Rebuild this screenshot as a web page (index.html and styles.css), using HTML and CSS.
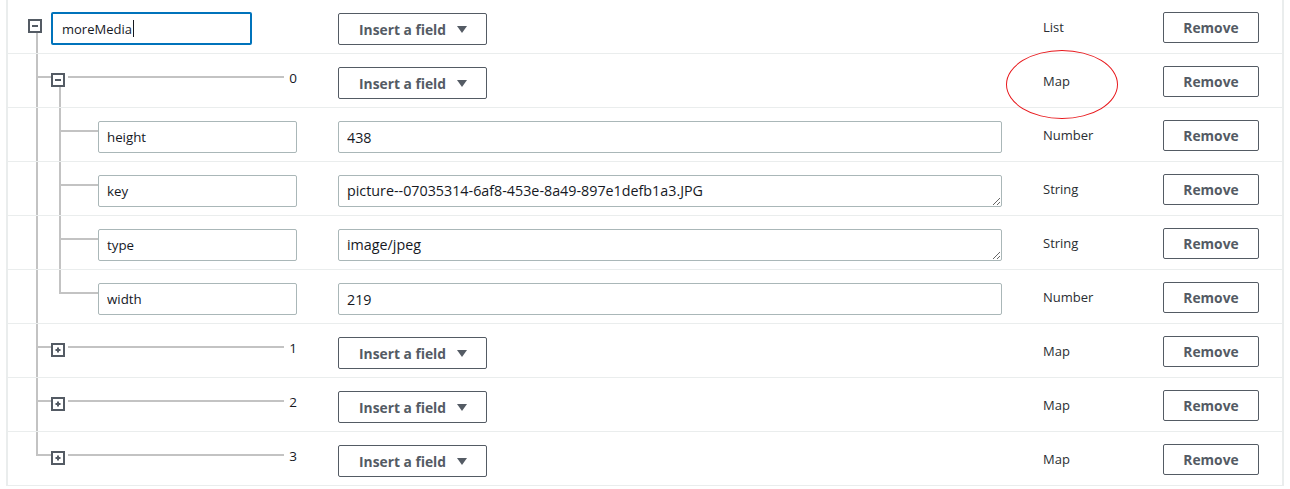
FILE: index.html
```html
<!DOCTYPE html>
<html lang="en">
<head>
	<meta charset="utf-8">
	<title>Edit item</title>
	<link rel="stylesheet" href="styles.css">
</head>
<body>
<div class="attr-tree">
	<!-- annotation drawn over the type column -->
	<span class="note-ring"></span>

	<!-- moreMedia (List) -->
	<div class="attr-row">
		<div class="key-cell">
			<div class="node node-root">
				<svg class="toggle" width="14" height="14" viewBox="0 0 14 14"><rect x="1" y="1" width="12" height="12" fill="#fff" stroke="#545b64" stroke-width="2"/><path d="M4 7h6" stroke="#545b64" stroke-width="2"/></svg>
				<span class="stem"></span>
			</div>
			<div class="name-box name-focus">moreMedia<span class="caret"></span></div>
		</div>
		<div class="value-cell"><button class="btn insert">Insert a field <svg width="10" height="7" viewBox="0 0 10 7"><path d="M0 0h10L5 7z" fill="#545b64"/></svg></button></div>
		<div class="type-cell">List</div>
		<div class="action-cell"><button class="btn remove">Remove</button></div>
	</div>

	<!-- 0 (Map) -->
	<div class="attr-row">
		<div class="key-cell">
			<div class="guide"><span class="arm"></span><span class="rail"></span></div>
			<div class="node">
				<svg class="toggle" width="14" height="14" viewBox="0 0 14 14"><rect x="1" y="1" width="12" height="12" fill="#fff" stroke="#545b64" stroke-width="2"/><path d="M4 7h6" stroke="#545b64" stroke-width="2"/></svg>
				<span class="stem"></span>
			</div>
			<span class="link"></span>
			<span class="index">0</span>
		</div>
		<div class="value-cell"><button class="btn insert">Insert a field <svg width="10" height="7" viewBox="0 0 10 7"><path d="M0 0h10L5 7z" fill="#545b64"/></svg></button></div>
		<div class="type-cell">Map</div>
		<div class="action-cell"><button class="btn remove">Remove</button></div>
	</div>

	<div class="attr-row">
		<div class="key-cell">
			<div class="guide"><span class="rail"></span></div>
			<div class="guide wide"><span class="arm"></span><span class="rail"></span></div>
			<input class="name-box" type="text" value="height">
		</div>
		<div class="value-cell"><input class="value-box" type="text" value="438"></div>
		<div class="type-cell">Number</div>
		<div class="action-cell"><button class="btn remove">Remove</button></div>
	</div>

	<div class="attr-row">
		<div class="key-cell">
			<div class="guide"><span class="rail"></span></div>
			<div class="guide wide"><span class="arm"></span><span class="rail"></span></div>
			<input class="name-box" type="text" value="key">
		</div>
		<div class="value-cell"><textarea class="value-box" rows="1">picture--07035314-6af8-453e-8a49-897e1defb1a3.JPG</textarea></div>
		<div class="type-cell">String</div>
		<div class="action-cell"><button class="btn remove">Remove</button></div>
	</div>

	<div class="attr-row">
		<div class="key-cell">
			<div class="guide"><span class="rail"></span></div>
			<div class="guide wide"><span class="arm"></span><span class="rail"></span></div>
			<input class="name-box" type="text" value="type">
		</div>
		<div class="value-cell"><textarea class="value-box" rows="1">image/jpeg</textarea></div>
		<div class="type-cell">String</div>
		<div class="action-cell"><button class="btn remove">Remove</button></div>
	</div>

	<div class="attr-row">
		<div class="key-cell">
			<div class="guide"><span class="rail"></span></div>
			<div class="guide wide"><span class="arm"></span></div>
			<input class="name-box" type="text" value="width">
		</div>
		<div class="value-cell"><input class="value-box" type="text" value="219"></div>
		<div class="type-cell">Number</div>
		<div class="action-cell"><button class="btn remove">Remove</button></div>
	</div>

	<!-- 1, 2, 3 collapsed -->
	<div class="attr-row">
		<div class="key-cell">
			<div class="guide"><span class="arm"></span><span class="rail"></span></div>
			<div class="node">
				<svg class="toggle" width="14" height="14" viewBox="0 0 14 14"><rect x="1" y="1" width="12" height="12" fill="#fff" stroke="#545b64" stroke-width="2"/><path d="M4.5 7h5M7 4.5v5" stroke="#545b64" stroke-width="2"/></svg>
			</div>
			<span class="link"></span>
			<span class="index">1</span>
		</div>
		<div class="value-cell"><button class="btn insert">Insert a field <svg width="10" height="7" viewBox="0 0 10 7"><path d="M0 0h10L5 7z" fill="#545b64"/></svg></button></div>
		<div class="type-cell">Map</div>
		<div class="action-cell"><button class="btn remove">Remove</button></div>
	</div>

	<div class="attr-row">
		<div class="key-cell">
			<div class="guide"><span class="arm"></span><span class="rail"></span></div>
			<div class="node">
				<svg class="toggle" width="14" height="14" viewBox="0 0 14 14"><rect x="1" y="1" width="12" height="12" fill="#fff" stroke="#545b64" stroke-width="2"/><path d="M4.5 7h5M7 4.5v5" stroke="#545b64" stroke-width="2"/></svg>
			</div>
			<span class="link"></span>
			<span class="index">2</span>
		</div>
		<div class="value-cell"><button class="btn insert">Insert a field <svg width="10" height="7" viewBox="0 0 10 7"><path d="M0 0h10L5 7z" fill="#545b64"/></svg></button></div>
		<div class="type-cell">Map</div>
		<div class="action-cell"><button class="btn remove">Remove</button></div>
	</div>

	<div class="attr-row">
		<div class="key-cell">
			<div class="guide"><span class="arm"></span></div>
			<div class="node">
				<svg class="toggle" width="14" height="14" viewBox="0 0 14 14"><rect x="1" y="1" width="12" height="12" fill="#fff" stroke="#545b64" stroke-width="2"/><path d="M4.5 7h5M7 4.5v5" stroke="#545b64" stroke-width="2"/></svg>
			</div>
			<span class="link"></span>
			<span class="index">3</span>
		</div>
		<div class="value-cell"><button class="btn insert">Insert a field <svg width="10" height="7" viewBox="0 0 10 7"><path d="M0 0h10L5 7z" fill="#545b64"/></svg></button></div>
		<div class="type-cell">Map</div>
		<div class="action-cell"><button class="btn remove">Remove</button></div>
	</div>
</div>
</body>
</html>
```

FILE: styles.css
```css
body {
	margin: 0;
	background: #fff;
	font-family: "Open Sans", "Liberation Sans", sans-serif;
	font-size: 13px;
	color: #16191f;
}

.attr-tree {
	position: relative;
	width: 1278px;
	margin-left: 6px;
	box-sizing: border-box;
	border-left: 2px solid #eaeded;
	border-right: 2px solid #eaeded;
}

.attr-row {
	display: flex;
	height: 54px;
	box-sizing: border-box;
	border-bottom: 1px solid #eaeded;
}

/* key column with the tree guides */
.key-cell {
	display: flex;
	flex: none;
	width: 330px;
	box-sizing: border-box;
	padding: 0 41px 0 20px;
}

.guide {
	display: flex;
	flex-direction: column;
	flex: none;
	width: 23px;
}
.guide.wide {
	width: 47px;
}
.arm {
	flex: none;
	height: 22px;
	margin-left: 8px;
	border-left: 2px solid #c3c3c3;
	border-bottom: 2px solid #c3c3c3;
}
.rail {
	flex: 1;
	margin-left: 8px;
	border-left: 2px solid #c3c3c3;
}

.node {
	display: flex;
	flex-direction: column;
	flex: none;
	width: 14px;
}
.node-root {
	width: 23px;
}
.toggle {
	display: block;
	flex: none;
	margin-top: 19px;
}
.stem {
	flex: 1;
	margin-left: 8px;
	border-left: 2px solid #c3c3c3;
}

.link {
	flex: 1;
	height: 22px;
	margin: 0 5px 0 3px;
	border-bottom: 2px solid #c3c3c3;
}
.index {
	margin-top: 15px;
	line-height: 18px;
	font-size: 13.5px;
}

.name-box {
	flex: none;
	align-self: flex-start;
	width: 199px;
	height: 32px;
	margin: 13px 0 0 0;
	padding: 0 8px;
	box-sizing: border-box;
	border: 1px solid #aab7b8;
	border-radius: 2px;
	font: inherit;
	font-size: 13.3px;
	color: #16191f;
	outline: none;
}
.name-focus {
	display: flex;
	align-items: center;
	width: 201px;
	height: 33px;
	margin-top: 12px;
	padding-left: 9px;
	border: 2px solid #0073bb;
	font-size: 13px;
}
.caret {
	display: inline-block;
	width: 1px;
	height: 17px;
	margin-left: 1px;
	background: #16191f;
}

/* value column */
.value-cell {
	flex: none;
	width: 664px;
}
.value-box {
	display: block;
	width: 664px;
	height: 32px;
	margin-top: 13px;
	padding: 0 8px;
	box-sizing: border-box;
	border: 1px solid #aab7b8;
	border-radius: 2px;
	font: inherit;
	font-size: 14.3px;
	color: #16191f;
	outline: none;
}
textarea.value-box {
	padding: 5px 8px;
	line-height: 20px;
	overflow: hidden;
	resize: vertical;
}

.btn {
	box-sizing: border-box;
	border: 1px solid #545b64;
	border-radius: 2px;
	background: #fff;
	font-family: inherit;
	font-size: 13.8px;
	font-weight: 700;
	color: #545b64;
}
.insert {
	display: flex;
	align-items: center;
	gap: 11px;
	width: 149px;
	height: 32px;
	margin-top: 13px;
	padding: 0 0 0 20px;
}

.type-cell {
	flex: none;
	width: 120px;
	margin: 17px 0 0 41px;
	line-height: 20px;
	color: #2a2e33;
}

.action-cell {
	flex: none;
	width: 96px;
}
.remove {
	width: 96px;
	height: 31px;
	margin-top: 12px;
	padding: 0 0 1px;
}

.note-ring {
	position: absolute;
	left: 998px;
	top: 50px;
	width: 112px;
	height: 69px;
	box-sizing: border-box;
	border: 1px solid #e8191d;
	border-radius: 50%;
	pointer-events: none;
}
```
